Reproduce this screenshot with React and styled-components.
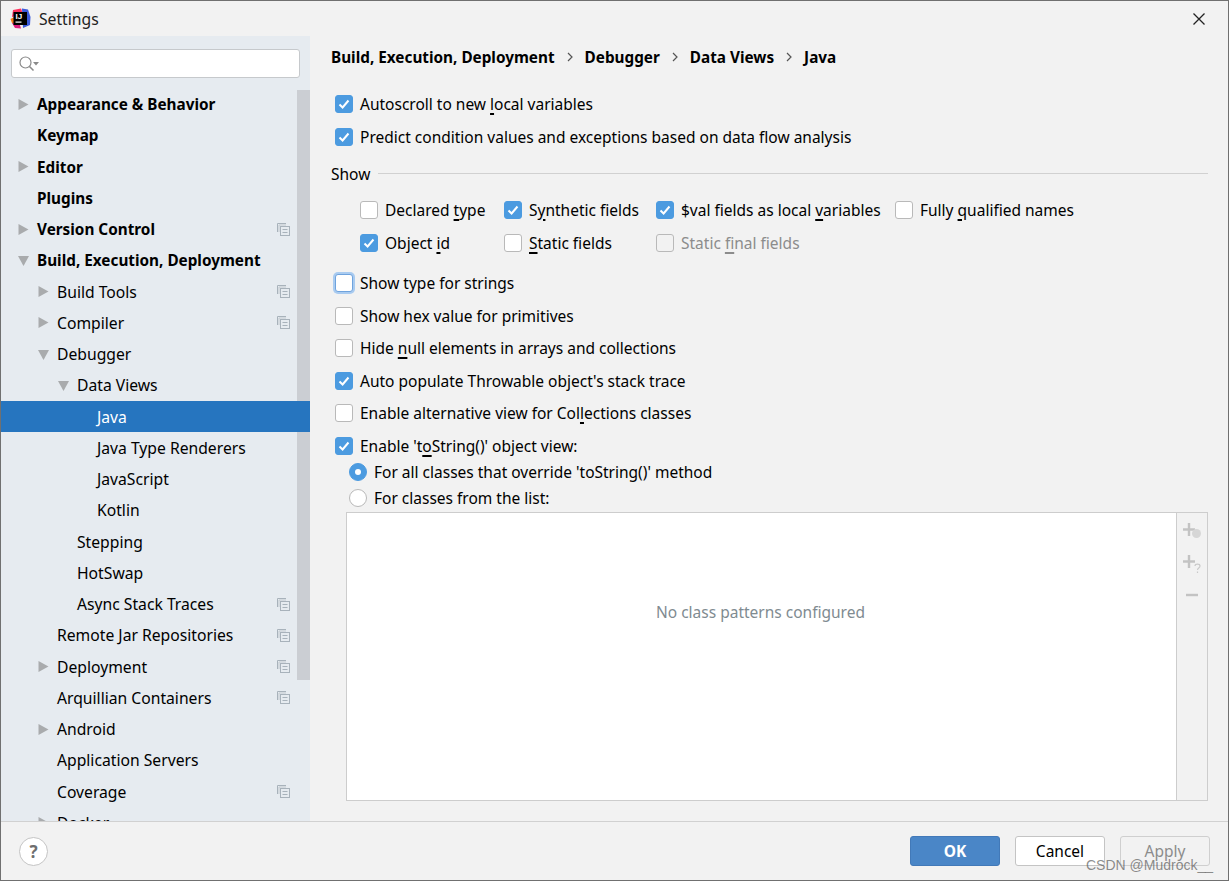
import React from "react";
import styled, { createGlobalStyle } from "styled-components";

const Global = createGlobalStyle`
    html, body {
        margin: 0;
        padding: 0;
        background: #f2f2f2;
    }
    * {
        box-sizing: border-box;
    }
    body {
        font-family: "Noto Sans", "Open Sans", sans-serif;
        font-size: 15.5px;
        color: #000;
    }
`;

const Window = styled.div`
    position: relative;
    width: 1229px;
    height: 881px;
    display: flex;
    flex-direction: column;
    background: #f2f2f2;
    border: 1px solid #707070;
    overflow: hidden;
`;

const TitleBar = styled.div`
    height: 35px;
    flex: none;
    display: flex;
    align-items: center;
    justify-content: space-between;
    padding: 0 22px 0 9px;
    background: #f2f2f2;
`;

const TitleLeft = styled.div`
    display: flex;
    align-items: center;
    gap: 8px;
    font-size: 15.7px;
    color: #222;
`;

const Body = styled.div`
    flex: 1;
    min-height: 0;
    display: flex;
`;

const Sidebar = styled.aside`
    position: relative;
    width: 309px;
    flex: none;
    display: flex;
    flex-direction: column;
    background: #e6ebf0;
    overflow: hidden;
`;

const SearchBox = styled.div`
    height: 29px;
    flex: none;
    margin: 13px 10px 10.5px 10px;
    display: flex;
    align-items: center;
    padding-left: 6px;
    background: #fff;
    border: 1px solid #c6c9cc;
    border-radius: 3px;
`;

const Scrollbar = styled.div`
    position: absolute;
    top: 54px;
    right: 0;
    width: 13px;
    height: 590px;
    background: #cbced3;
`;

const Tree = styled.div`
    position: relative;
    z-index: 1;
    display: flex;
    flex-direction: column;
`;

const Row = styled.div`
    flex: none;
    height: 31.25px;
    display: flex;
    align-items: center;
    padding-left: ${(p) => 16 + p.$level * 20}px;
    padding-right: 20px;
    background: ${(p) => (p.$selected ? "#2675bf" : "transparent")};
    color: ${(p) => (p.$selected ? "#fff" : "#000")};
    font-size: ${(p) => (p.$bold ? 15.3 : 15.7)}px;
    font-weight: ${(p) => (p.$bold ? 700 : 400)};
    white-space: nowrap;
`;

const ArrowSlot = styled.span`
    width: 20px;
    flex: none;
    display: flex;
    align-items: center;
`;

const RowLabel = styled.span`
    flex: 1;
`;

const Main = styled.main`
    flex: 1;
    min-width: 0;
    display: flex;
    flex-direction: column;
    padding: 0 20px 20px 21px;
`;

const Breadcrumb = styled.div`
    height: 42px;
    flex: none;
    display: flex;
    align-items: center;
    gap: 11px;
    font-size: 15.3px;
    font-weight: 700;
    margin-bottom: 9px;
`;

const Sep = styled.svg`
    width: 8px;
    height: 10px;
`;

const CheckRow = styled.label`
    display: flex;
    align-items: center;
    gap: 7px;
    height: ${(p) => p.$height || 33}px;
    padding-left: 4px;
    color: ${(p) => (p.$disabled ? "#8c8c8c" : "#000")};
    white-space: nowrap;
    u {
        text-decoration-thickness: 1.5px;
        text-underline-offset: 3px;
    }
`;

const Box = styled.span`
    width: 18px;
    height: 18px;
    flex: none;
    display: flex;
    align-items: center;
    justify-content: center;
    border-radius: 3px;
    background: ${(p) => (p.$checked ? "#4c9be0" : p.$disabled ? "#f2f2f2" : "#fff")};
    border: 1px solid ${(p) => (p.$checked ? "#4c9be0" : p.$focus ? "#6fa3dd" : "#b9b9b9")};
    box-shadow: ${(p) => (p.$focus ? "0 0 0 2px #a9cbf0" : "none")};
`;

const SectionTitle = styled.div`
    display: flex;
    align-items: center;
    gap: 8px;
    height: 33px;
    margin-top: 4px;
    &::after {
        content: "";
        flex: 1;
        height: 1px;
        background: #d1d1d1;
    }
`;

const ShowGrid = styled.div`
    display: grid;
    grid-template-columns: 144px 152px 239px auto;
    grid-auto-rows: 33px;
    padding: 3px 0 0 25px;
    margin-bottom: 8px;
`;

const RadioGroup = styled.div`
    margin: -3px 0 1px;
`;

const RadioRow = styled.div`
    display: flex;
    align-items: center;
    gap: 7px;
    height: 26px;
    padding-left: 18px;
    white-space: nowrap;
`;

const Radio = styled.span`
    width: 18px;
    height: 18px;
    flex: none;
    display: flex;
    align-items: center;
    justify-content: center;
    border-radius: 50%;
    background: ${(p) => (p.$on ? "#4c9be0" : "#fff")};
    border: 1px solid ${(p) => (p.$on ? "#4c9be0" : "#b9b9b9")};
    &::after {
        content: "";
        display: ${(p) => (p.$on ? "block" : "none")};
        width: 6px;
        height: 6px;
        border-radius: 50%;
        background: #fff;
    }
`;

const ListPanel = styled.div`
    flex: 1;
    min-height: 0;
    margin-left: 15px;
    display: flex;
    border: 1px solid #cdcdcd;
`;

const ListEmpty = styled.div`
    flex: 1;
    display: flex;
    align-items: center;
    justify-content: center;
    background: #fff;
    color: #7f8b91;
    padding: 0 2px 89px 0;
`;

const ListTools = styled.div`
    width: 31px;
    flex: none;
    display: flex;
    flex-direction: column;
    align-items: center;
    gap: 10px;
    padding-top: 7px;
    border-left: 1px solid #cdcdcd;
    background: #f2f2f2;
`;

const Footer = styled.footer`
    height: 59px;
    flex: none;
    display: flex;
    align-items: center;
    justify-content: space-between;
    padding: 0 18px 0 18px;
    border-top: 1px solid #d1d1d1;
    background: #f2f2f2;
`;

const HelpButton = styled.div`
    width: 29px;
    height: 29px;
    display: flex;
    align-items: center;
    justify-content: center;
    border-radius: 50%;
    background: #fff;
    border: 1px solid #c4c4c4;
    color: #6e6e6e;
    font-weight: 700;
    font-size: 17px;
`;

const Buttons = styled.div`
    display: flex;
    gap: 15px;
`;

const Button = styled.div`
    width: 90px;
    height: 30px;
    display: flex;
    align-items: center;
    justify-content: center;
    border-radius: 3px;
    border: 1px solid ${(p) => (p.$primary ? "#4279b8" : p.$disabled ? "#cfcfcf" : "#c4c4c4")};
    background: ${(p) => (p.$primary ? "#4a86c7" : p.$disabled ? "#f2f2f2" : "#fff")};
    color: ${(p) => (p.$primary ? "#fff" : p.$disabled ? "#8c8c8c" : "#000")};
    font-weight: ${(p) => (p.$primary ? 700 : 400)};
`;

const Watermark = styled.div`
    position: absolute;
    right: 15px;
    bottom: 7px;
    font-family: "Liberation Sans", sans-serif;
    font-size: 14px;
    color: rgba(70, 70, 70, 0.62);
    white-space: nowrap;
`;

const LogoText = styled.text`
    font-family: "Liberation Sans", sans-serif;
    font-size: 8px;
    font-weight: 700;
    fill: #fff;
`;

const Logo = () => (
    <svg width="21" height="21" viewBox="0 0 21 21">
        <path d="M0.5 11 L6 8 L7 17 L2 15 Z" fill="#f97a12" />
        <path d="M3 2 L11 0.5 L13 6 L2 9 Z" fill="#fe315d" />
        <path d="M2 15 L9 14 L11 20.5 L5 20 Z" fill="#dd1f7f" />
        <path d="M12 0.5 L18 1.5 L20.5 9 L20 17 L13 20 Z" fill="#3b5bdb" />
        <rect x="3.5" y="4" width="13.5" height="13" fill="#000" />
        <LogoText x="5.5" y="11">IJ</LogoText>
        <rect x="5.5" y="13.5" width="6" height="1.2" fill="#fff" />
    </svg>
);

const CloseIcon = () => (
    <svg width="14" height="14" viewBox="0 0 14 14">
        <path d="M1.5 1.5 L12.5 12.5 M12.5 1.5 L1.5 12.5" stroke="#222" strokeWidth="1.3" fill="none" />
    </svg>
);

const SearchIcon = () => (
    <svg width="22" height="18" viewBox="0 0 22 18">
        <circle cx="7.5" cy="7.5" r="5.5" stroke="#8a8a8a" strokeWidth="1.2" fill="none" />
        <path d="M11.5 11.5 L15.5 15.5" stroke="#8a8a8a" strokeWidth="1.6" />
        <path d="M15 7 L21 7 L18 10.5 Z" fill="#8a8a8a" />
    </svg>
);

const Arrow = ({ open }) => (
    <svg width="13" height="13" viewBox="0 0 13 13">
        {open ? (
            <path d="M1 2 L12 2 L6.5 12 Z" fill="#a9abad" />
        ) : (
            <path d="M1.5 1 L11.5 6.5 L1.5 12 Z" fill="#a9abad" />
        )}
    </svg>
);

const ProjectIcon = () => (
    <svg width="13" height="13" viewBox="0 0 13 13">
        <path d="M0.5 9 V0.5 H9" stroke="#a8b2bb" fill="none" />
        <path d="M2 9 V2 H9" stroke="#c2c9cf" fill="none" />
        <rect x="3.5" y="3.5" width="9" height="9" fill="#e6ebf0" stroke="#a8b2bb" />
        <path d="M5.5 6.5 H10.5 M5.5 9.5 H10.5" stroke="#a8b2bb" />
    </svg>
);

const Tick = () => (
    <svg width="12" height="12" viewBox="0 0 12 12">
        <path d="M1.5 6.5 L4.6 9.5 L10.5 2.5" stroke="#fff" strokeWidth="2" fill="none" />
    </svg>
);

const AddIcon = ({ mark }) => (
    <svg width="22" height="22" viewBox="0 0 22 22">
        <path d="M8 3 V16 M2 9.5 H14" stroke="#c3c3c3" strokeWidth="2.4" />
        {mark === "dot" && <circle cx="15.5" cy="13.5" r="4.5" fill="#d6d6d6" />}
        {mark === "query" && (
            <path d="M14 14 C14 11.5 19 11.5 19 14 C19 16 16.5 16 16.5 18 M16.5 19.5 V21" stroke="#c9c9c9" strokeWidth="1.2" fill="none" />
        )}
    </svg>
);

const RemoveIcon = () => (
    <svg width="22" height="22" viewBox="0 0 22 22">
        <path d="M5 11 H17" stroke="#c3c3c3" strokeWidth="2.4" />
    </svg>
);

const treeItems = [
    { label: "Appearance & Behavior", level: 0, bold: true, arrow: "closed" },
    { label: "Keymap", level: 0, bold: true },
    { label: "Editor", level: 0, bold: true, arrow: "closed" },
    { label: "Plugins", level: 0, bold: true },
    { label: "Version Control", level: 0, bold: true, arrow: "closed", project: true },
    { label: "Build, Execution, Deployment", level: 0, bold: true, arrow: "open" },
    { label: "Build Tools", level: 1, arrow: "closed", project: true },
    { label: "Compiler", level: 1, arrow: "closed", project: true },
    { label: "Debugger", level: 1, arrow: "open" },
    { label: "Data Views", level: 2, arrow: "open" },
    { label: "Java", level: 3, selected: true },
    { label: "Java Type Renderers", level: 3 },
    { label: "JavaScript", level: 3 },
    { label: "Kotlin", level: 3 },
    { label: "Stepping", level: 2 },
    { label: "HotSwap", level: 2 },
    { label: "Async Stack Traces", level: 2, project: true },
    { label: "Remote Jar Repositories", level: 1, project: true },
    { label: "Deployment", level: 1, arrow: "closed", project: true },
    { label: "Arquillian Containers", level: 1, project: true },
    { label: "Android", level: 1, arrow: "closed" },
    { label: "Application Servers", level: 1 },
    { label: "Coverage", level: 1, project: true },
    { label: "Docker", level: 1, arrow: "closed" },
];

const Check = ({ checked, disabled, focus, height, children }) => (
    <CheckRow $height={height} $disabled={disabled}>
        <Box $checked={checked} $disabled={disabled} $focus={focus}>
            {checked && <Tick />}
        </Box>
        <span>{children}</span>
    </CheckRow>
);

export default function App() {
    return (
        <Window>
            <Global />
            <TitleBar>
                <TitleLeft>
                    <Logo />
                    Settings
                </TitleLeft>
                <CloseIcon />
            </TitleBar>
            <Body>
                <Sidebar>
                    <SearchBox>
                        <SearchIcon />
                    </SearchBox>
                    <Scrollbar />
                    <Tree>
                        {treeItems.map((item) => (
                            <Row key={item.label} $level={item.level} $bold={item.bold} $selected={item.selected}>
                                <ArrowSlot>{item.arrow && <Arrow open={item.arrow === "open"} />}</ArrowSlot>
                                <RowLabel>{item.label}</RowLabel>
                                {item.project && <ProjectIcon />}
                            </Row>
                        ))}
                    </Tree>
                </Sidebar>
                <Main>
                    <Breadcrumb>
                        <span>Build, Execution, Deployment</span>
                        <Sep viewBox="0 0 8 10"><path d="M2 1 L6 5 L2 9" stroke="#555" strokeWidth="1.2" fill="none" /></Sep>
                        <span>Debugger</span>
                        <Sep viewBox="0 0 8 10"><path d="M2 1 L6 5 L2 9" stroke="#555" strokeWidth="1.2" fill="none" /></Sep>
                        <span>Data Views</span>
                        <Sep viewBox="0 0 8 10"><path d="M2 1 L6 5 L2 9" stroke="#555" strokeWidth="1.2" fill="none" /></Sep>
                        <span>Java</span>
                    </Breadcrumb>
                    <Check checked>Autoscroll to new <u>l</u>ocal variables</Check>
                    <Check checked>Predict condition values and exceptions based on data flow analysis</Check>
                    <SectionTitle>Show</SectionTitle>
                    <ShowGrid>
                        <Check>Declared <u>t</u>ype</Check>
                        <Check checked>S<u>y</u>nthetic fields</Check>
                        <Check checked>$val fields as local <u>v</u>ariables</Check>
                        <Check>Fully <u>q</u>ualified names</Check>
                        <Check checked>Object <u>i</u>d</Check>
                        <Check><u>S</u>tatic fields</Check>
                        <Check disabled>Static <u>f</u>inal fields</Check>
                    </ShowGrid>
                    <Check focus height={32.5}>Show type for strings</Check>
                    <Check height={32.5}>Show hex value for primitives</Check>
                    <Check height={32.5}>Hide <u>n</u>ull elements in arrays and collections</Check>
                    <Check checked height={32.5}>Auto populate Throwable object's stack trace</Check>
                    <Check height={32.5}>Enable alternative view for Col<u>l</u>ections classes</Check>
                    <Check checked height={32.5}>Enable 't<u>o</u>String()' object view:</Check>
                    <RadioGroup>
                        <RadioRow><Radio $on />For all classes that override 'toString()' method</RadioRow>
                        <RadioRow><Radio />For classes from the list:</RadioRow>
                    </RadioGroup>
                    <ListPanel>
                        <ListEmpty>No class patterns configured</ListEmpty>
                        <ListTools>
                            <AddIcon mark="dot" />
                            <AddIcon mark="query" />
                            <RemoveIcon />
                        </ListTools>
                    </ListPanel>
                </Main>
            </Body>
            <Footer>
                <HelpButton>?</HelpButton>
                <Buttons>
                    <Button $primary>OK</Button>
                    <Button>Cancel</Button>
                    <Button $disabled>Apply</Button>
                </Buttons>
            </Footer>
            <Watermark>CSDN @Mudrock__</Watermark>
        </Window>
    );
}
